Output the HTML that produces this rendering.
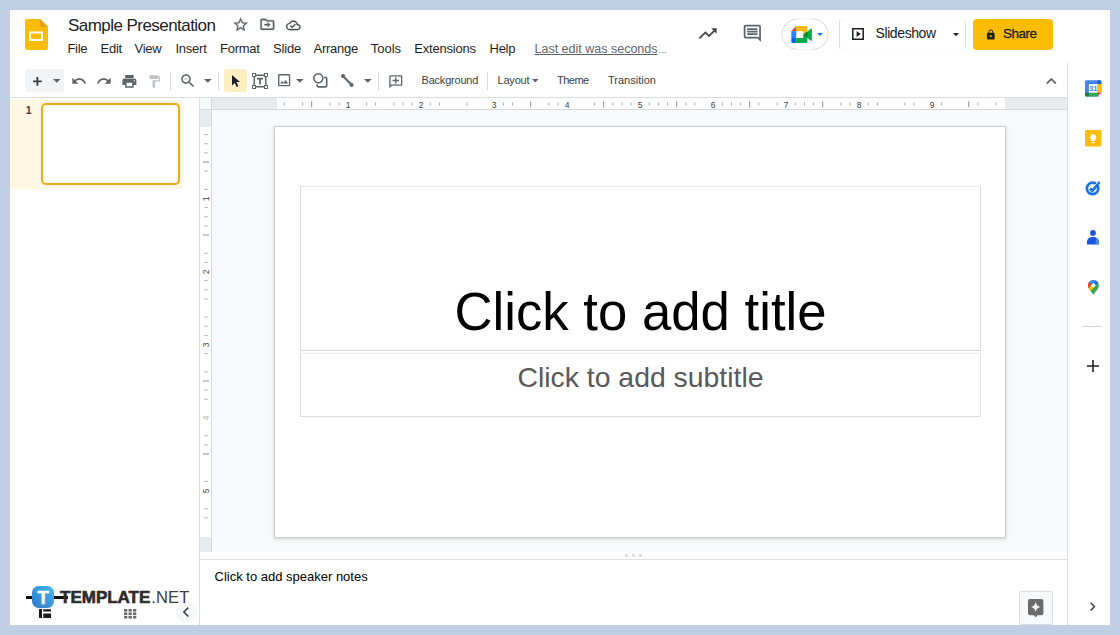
<!DOCTYPE html>
<html lang="en">
<head>
<meta charset="utf-8">
<title>Sample Presentation - Google Slides</title>
<style>
*{box-sizing:border-box;margin:0;padding:0}
html,body{width:1120px;height:635px;overflow:hidden;background:#c1cfe6}
body{font-family:"Liberation Sans",sans-serif;color:#202124;position:relative}
.abs,#app *{position:absolute}
#app{position:absolute;left:10px;top:10px;width:1100px;height:615px;background:#fff;overflow:hidden}
/* coordinates inside #app are page coords minus 10 */
.t{white-space:nowrap;line-height:1}
svg{display:block;overflow:visible}
.menu{top:30.900px;font-size:13px;letter-spacing:-.25px;line-height:16px;color:#1f1f1f}
.tb{top:64px;font-size:11px;letter-spacing:-.2px;line-height:13px;color:#3c4043}
.sep{width:1px;background:#dadce0;top:62px;height:18px}
.ic{fill:#5f6368}
.caret{width:0;height:0;border-left:3.5px solid transparent;border-right:3.5px solid transparent;border-top:3.5px solid #5f6368}
</style>
</head>
<body>
<div id="app">

<!-- ===== header ===== -->
<div id="logo" style="left:15px;top:9px;width:23px;height:31px">
<svg width="23" height="31" viewBox="0 0 23 31"><path d="M2.5 0H15l8 8v20.5a2.5 2.5 0 0 1-2.5 2.5h-18A2.5 2.5 0 0 1 0 28.500V2.5A2.500 2.500 0 0 1 2.500 0z" fill="#fbbc04"/><path d="M15 0l8 8h-6a2 2 0 0 1-2-2z" fill="#f29900"/><path d="M4 12.500h14v9.500H4zM6 14.500v5.500h10v-5.500z" fill="#fff" fill-rule="evenodd"/></svg>
</div>
<div class="t" id="doctitle" style="left:58px;top:6px;font-size:17px;letter-spacing:-.55px;line-height:20px;color:#202124">Sample Presentation</div>

<div class="t menu" style="left:57.4px">File</div>
<div class="t menu" style="left:90.500px">Edit</div>
<div class="t menu" style="left:124.500px">View</div>
<div class="t menu" style="left:165.500px">Insert</div>
<div class="t menu" style="left:210px">Format</div>
<div class="t menu" style="left:263px;letter-spacing:-.15px">Slide</div>
<div class="t menu" style="left:303.500px">Arrange</div>
<div class="t menu" style="left:360.700px;letter-spacing:0">Tools</div>
<div class="t menu" style="left:404.300px;letter-spacing:-.2px">Extensions</div>
<div class="t menu" style="left:479.500px">Help</div>
<div class="t menu" style="left:524.500px;font-size:12.500px;letter-spacing:0;color:#5f6368;top:30.700px"><span style="position:static;text-decoration:underline">Last edit was seconds</span><span style="position:static;font-size:9px;letter-spacing:-.3px;margin-left:.5px">…</span></div>

<!-- ===== toolbar ===== -->
<div id="tbline" style="left:0;top:87px;width:1058px;height:1px;background:#dadce0"></div>
<div style="left:15px;top:59px;width:39px;height:23px;border-radius:3px;background:#f1f3f4"></div>
<div style="left:214px;top:59px;width:23px;height:23px;border-radius:3px;background:#feefc3"></div>
<div class="sep" style="left:160px"></div>
<div class="sep" style="left:208px"></div>
<div class="sep" style="left:368px"></div>
<div class="sep" style="left:477px"></div>
<div class="t tb" style="left:411.500px">Background</div>
<div class="t tb" style="left:487.500px">Layout</div>
<div class="t tb" style="left:547px;letter-spacing:-.5px">Theme</div>
<div class="t tb" style="left:598px;letter-spacing:0">Transition</div>

<!-- ===== header icons ===== -->
<svg style="left:221.76px;top:5.72px" width="17.28" height="17.28" viewBox="0 0 24 24" ><path d="M22 9.240l-7.190-.62L12 2 9.190 8.630 2 9.240l5.460 4.730L5.820 21 12 17.270 18.180 21l-1.630-7.030L22 9.240zM12 15.400l-3.760 2.270 1-4.280-3.320-2.880 4.380-.38L12 6.100l1.710 4.040 4.380.38-3.320 2.880 1 4.280L12 15.400z" fill="#5f6368" stroke="#5f6368" stroke-width="0.3" stroke-linejoin="round"/></svg>
<svg style="left:248.51px;top:6.22px" width="16.68" height="16.68" viewBox="0 0 24 24" ><path d="M20 6h-8l-2-2H4c-1.100 0-2 .9-2 2v12c0 1.100.9 2 2 2h16c1.100 0 2-.9 2-2V8c0-1.100-.9-2-2-2zm0 12H4V6h5.170l2 2H20v10zm-7.500-2l4-3.500-4-3.500v2.500H8v2h4.500V16z" fill="#5f6368" stroke="#5f6368" stroke-width="0.45" stroke-linejoin="round"/></svg>
<svg style="left:276.30px;top:7.57px" width="14.60" height="14.60" viewBox="0 0 24 24" ><path d="M19.350 10.040C18.670 6.590 15.640 4 12 4 9.110 4 6.600 5.640 5.350 8.040 2.340 8.360 0 10.910 0 14c0 3.310 2.690 6 6 6h13c2.760 0 5-2.240 5-5 0-2.640-2.050-4.780-4.650-4.960zM19 18H6c-2.210 0-4-1.790-4-4 0-2.050 1.530-3.760 3.560-3.970l1.070-.11.5-.95C8.080 7.140 9.940 6 12 6c2.620 0 4.880 1.860 5.390 4.430l.3 1.500 1.530.11c1.560.1 2.780 1.410 2.780 2.960 0 1.650-1.350 3-3 3zm-9-3.820l-2.090-2.090L6.500 13.500 10 17l6.010-6.010-1.410-1.410z" fill="#4a4d51" stroke="#4a4d51" stroke-width="0.4" stroke-linejoin="round"/></svg>
<svg style="left:686.81px;top:12.63px" width="21.48" height="21.48" viewBox="0 0 24 24" ><path d="M16 6l2.290 2.290-4.880 4.880-4-4L2 16.590 3.410 18l6-6 4 4 6.300-6.290L22 12V6z" fill="#444746"/></svg>
<svg style="left:732.28px;top:13.18px" width="20.64" height="20.64" viewBox="0 0 24 24" ><path d="M21.990 4c0-1.100-.89-2-1.990-2H4c-1.100 0-2 .9-2 2v12c0 1.100.9 2 2 2h14l4 4-.01-18zM20 4v13.170L18.830 16H4V4h16zM6 12h12v2H6zm0-3h12v2H6zm0-3h12v2H6z" fill="#5f6368"/></svg>
<svg style="left:771px;top:8.2px" width="48" height="32" viewBox="0 0 48 32"><path d="M16.2 .9A15.3 15.3 0 0 0 16.2 31.500M31.800 .9A15.3 15.3 0 0 1 31.800 31.500" fill="none" stroke="#d3d6da" stroke-width=".9"/><path d="M16.2 .9H31.800M16.2 31.500H31.800" fill="none" stroke="#f1f2f4" stroke-width=".9"/></svg>
<svg style="left:780.8px;top:15.8px" width="21.2" height="17" viewBox="0 0 21.2 17"><path d="M.3 5.1L5.3 .1V5.1z" fill="#ea4335"/><path d="M5.3 .1H15a1.4 1.4 0 0 1 1.4 1.4V5.6L12.3 8.700V5.200H5.300z" fill="#fbbc04"/><path d="M.3 5.1h5v7h-5z" fill="#2684fc"/><path d="M.3 12.1h5V17H1.8a1.500 1.500 0 0 1-1.500-1.500z" fill="#0066da"/><path d="M5.3 12.1h7V8.700l4.100 3.100v3.800A1.400 1.400 0 0 1 15 17H5.300z" fill="#00ac47"/><path d="M12.3 8.700L20 2.700c.4-.3.900 0 .9.500v11.100c0 .5-.5.800-.9.500z" fill="#00ac47"/><path d="M12.3 8.700L16.400 5.600v6.200z" fill="#00832d"/></svg>

<div style="left:829px;top:8.500px;width:127px;height:31.500px;border:1px solid #dcdfe3;border-top-color:rgba(220,223,227,.12);border-bottom-color:rgba(220,223,227,.12);border-radius:4px"></div>
<svg style="left:842.1px;top:17.8px" width="12" height="12" viewBox="0 0 12 12"><path d="M.8 .8h10.400v10.400H.8z" fill="none" stroke="#1b1c1e" stroke-width="1.500"/><path d="M4.600 3.100v5.800L8.700 6z" fill="#1b1c1e"/></svg>
<div class="t" style="left:865.500px;top:15px;font-size:14px;letter-spacing:-.4px;line-height:16px;color:#202124">Slideshow</div>

<div style="left:963px;top:9px;width:80px;height:31px;border-radius:4px;background:#fbbc04"></div>
<svg style="left:974.78px;top:18.62px" width="11.54" height="11.54" viewBox="0 0 24 24" ><path d="M18 8h-1V6c0-2.760-2.240-5-5-5S7 3.240 7 6v2H6c-1.100 0-2 .9-2 2v10c0 1.100.9 2 2 2h12c1.100 0 2-.9 2-2V10c0-1.100-.9-2-2-2zm-6 9c-1.100 0-2-.9-2-2s.9-2 2-2 2 .9 2 2-.9 2-2 2zm3.100-9H8.900V6c0-1.710 1.390-3.100 3.100-3.100 1.710 0 3.100 1.390 3.100 3.100v2z" fill="#202124"/></svg>
<div class="t" style="left:993px;top:15.6px;font-size:13.500px;letter-spacing:-.5px;-webkit-text-stroke:.28px #202124;line-height:16px;color:#202124">Share</div>
<!-- ===== toolbar icons ===== -->
<svg style="left:23.100px;top:66.600px" width="8.800" height="8.800" viewBox="0 0 8.800 8.800"><path d="M4.400 0v8.800M0 4.400h8.800" stroke="#3c4043" stroke-width="1.900" fill="none"/></svg>

<svg style="left:60.67px;top:62.73px" width="16.01" height="16.01" viewBox="0 0 24 24" ><path d="M12.5 8c-2.65 0-5.05.99-6.9 2.6L2 7v9h9l-3.620-3.620c1.390-1.160 3.160-1.880 5.120-1.880 3.540 0 6.550 2.310 7.600 5.500l2.370-.780C21.080 11.030 17.150 8 12.500 8z" fill="#5f6368"/></svg>
<svg style="left:85.97px;top:62.73px" width="16.01" height="16.01" viewBox="0 0 24 24" ><path d="M18.400 10.600C16.550 8.990 14.150 8 11.500 8c-4.650 0-8.580 3.030-9.960 7.220L3.900 16c1.050-3.190 4.050-5.500 7.600-5.500 1.950 0 3.730.72 5.120 1.880L13 16h9V7l-3.600 3.600z" fill="#5f6368"/></svg>
<svg style="left:110.50px;top:62.60px" width="16.80" height="16.80" viewBox="0 0 24 24" ><path d="M19 8H5c-1.660 0-3 1.340-3 3v6h4v4h12v-4h4v-6c0-1.660-1.340-3-3-3zm-3 11H8v-5h8v5zm3-7c-.55 0-1-.45-1-1s.45-1 1-1 1 .45 1 1-.45 1-1 1zm-1-9H6v4h12V3z" fill="#5f6368"/></svg>
<svg style="left:136.72px;top:63.66px" width="14.88" height="14.88" viewBox="0 0 24 24" ><path d="M18 4V3c0-.55-.45-1-1-1H5c-.55 0-1 .45-1 1v4c0 .55.45 1 1 1h12c.55 0 1-.45 1-1V6h1v4H9v11c0 .55.45 1 1 1h2c.55 0 1-.45 1-1v-9h8V4h-3z" fill="#bdc1c6"/></svg>
<svg style="left:168.69px;top:62.39px" width="17.69" height="17.69" viewBox="0 0 24 24" ><path d="M15.500 14h-.79l-.28-.27C15.410 12.590 16 11.110 16 9.500 16 5.910 13.090 3 9.500 3S3 5.910 3 9.500 5.910 16 9.500 16c1.610 0 3.090-.59 4.230-1.570l.27.28v.79l5 4.990L20.490 19l-4.990-5zm-6 0C7.010 14 5 11.990 5 9.500S7.010 5 9.500 5 14 7.010 14 9.500 11.990 14 9.500 14zM7 9h5v1H7z" fill="#5f6368"/></svg>

<svg style="left:221.90px;top:64.90px" width="8.10" height="12.00" viewBox="0 0 8.1 12" ><path d="M0 0v10.400l2.700-2.500 1.900 4.100 1.800-.8-1.900-4.100h3.600z" fill="#202124"/></svg>
<svg style="left:242.00px;top:63.00px" width="16.00" height="16.00" viewBox="0 0 16 16" ><path d="M2.200 2.200h11.600v11.600H2.200z" fill="none" stroke="#5f6368" stroke-width="1.400"/><g fill="#fff" stroke="#5f6368" stroke-width="1"><rect x=".5" y=".5" width="3" height="3"/><rect x="12.500" y=".5" width="3" height="3"/><rect x=".5" y="12.500" width="3" height="3"/><rect x="12.500" y="12.500" width="3" height="3"/></g><path d="M5 4.800h6v1.700H8.850v5H7.150v-5H5z" fill="#5f6368"/></svg>
<svg style="left:266.17px;top:61.97px" width="16.27" height="16.27" viewBox="0 0 24 24" ><path d="M19 5v14H5V5h14m0-2H5c-1.100 0-2 .9-2 2v14c0 1.100.9 2 2 2h14c1.100 0 2-.9 2-2V5c0-1.100-.9-2-2-2zm-4.860 8.860l-3 3.870L9 13.140 6 17h12l-3.860-5.140z" fill="#5f6368"/></svg>

<svg style="left:302.80px;top:63.00px" width="14.50" height="14.50" viewBox="0 0 14.5 14.5" ><circle cx="5.300" cy="5.300" r="4.500" fill="none" stroke="#5f6368" stroke-width="1.600"/><path d="M11.200 4.400h1.300a1.200 1.200 0 0 1 1.200 1.200v7.100a1.200 1.200 0 0 1-1.200 1.200H5.400a1.200 1.200 0 0 1-1.200-1.200v-1.200" fill="none" stroke="#5f6368" stroke-width="1.600"/></svg>
<svg style="left:330.50px;top:64.00px" width="12.60" height="13.00" viewBox="0 0 12.6 13" ><path d="M2 2l8.600 9" stroke="#5f6368" stroke-width="2.200" fill="none"/><circle cx="2" cy="2" r="2" fill="#5f6368"/><circle cx="10.600" cy="11" r="2" fill="#5f6368"/></svg>

<svg style="left:377.70px;top:63.60px" width="15.60" height="15.60" viewBox="0 0 24 24" ><path d="M2 4c0-1.100.9-2 2-2h16c1.100 0 2 .9 2 2v12c0 1.100-.9 2-2 2H6l-4 4V4zm2 13.170L5.170 16H20V4H4v13.170zM11 5h2v4h4v2h-4v4h-2v-4H7V9h4z" fill="#5f6368"/></svg>

<svg style="left:1030.75px;top:60.83px" width="20.60" height="20.60" viewBox="0 0 24 24" ><path d="M12 8l-6 6 1.410 1.410L12 10.830l4.590 4.580L18 14z" fill="#5f6368"/></svg>

<!-- carets -->
<svg style="left:42.70px;top:69.20px" width="7.6" height="3.8" viewBox="0 0 7.6 3.8"><path d="M0 0h7.6L3.8 3.8z" fill="#5f6368"/></svg>
<svg style="left:193.50px;top:69.20px" width="7.6" height="3.8" viewBox="0 0 7.6 3.8"><path d="M0 0h7.6L3.8 3.8z" fill="#5f6368"/></svg>
<svg style="left:286.10px;top:69.20px" width="7.6" height="3.8" viewBox="0 0 7.6 3.8"><path d="M0 0h7.6L3.8 3.8z" fill="#5f6368"/></svg>
<svg style="left:353.50px;top:69.20px" width="7.6" height="3.8" viewBox="0 0 7.6 3.8"><path d="M0 0h7.6L3.8 3.8z" fill="#5f6368"/></svg>
<svg style="left:521.70px;top:69.40px" width="6.6" height="3.4" viewBox="0 0 6.6 3.4"><path d="M0 0h6.6L3.3 3.4z" fill="#5f6368"/></svg>
<svg style="left:806.60px;top:22.80px" width="6" height="3" viewBox="0 0 6 3"><path d="M0 0h6L3.0 3z" fill="#1a73e8"/></svg>
<svg style="left:942.8px;top:23px" width="6" height="3.2" viewBox="0 0 6 3.2"><path d="M0 0h6L3 3.200z" fill="#202124"/></svg>
<!-- ===== filmstrip ===== -->
<div style="left:0;top:90px;width:173px;height:89px;background:#fef7e4;border-radius:0 4px 4px 0"></div>
<div class="t" id="num1" style="left:15.700px;top:94.800px;font-size:10.500px;font-weight:700;color:#3c4043">1</div>
<div style="left:31px;top:93px;width:139px;height:82px;border:2px solid #f0a91a;border-radius:5px;background:#fff"></div>
<div style="left:189px;top:88px;width:1px;height:527px;background:#dadce0"></div>

<!-- ===== editor ===== -->
<div id="canvas" style="left:190px;top:88px;width:867px;height:454px;background:#f8f9fa"></div>
<div id="hruler" style="left:202px;top:88px;width:855px;height:12px;background:#e8eaed;border-bottom:1px solid #d5d8dc"></div>
<div style="left:267px;top:88px;width:728px;height:11px;background:#fff"></div>
<div id="vruler" style="left:190px;top:100px;width:12px;height:442px;background:#e8eaed;border-right:1px solid #d5d8dc"></div>
<div style="left:190px;top:117px;width:11px;height:410px;background:#fff"></div>
<div style="left:190px;top:88px;width:12px;height:12px;background:#f9fafb;border-right:1px solid #d5d8dc;border-bottom:1px solid #d5d8dc"></div>

<svg id="hticks" style="left:202px;top:87.6px" width="855" height="13" viewBox="0 0 855 13" font-family="Liberation Sans, sans-serif" font-size="8.500" fill="#3c4043"><path d="M72.32 4.400v3.200M90.57 4.400v3.200M117.95 4.400v3.200M127.07 4.400v3.200M154.45 4.400v3.200M163.57 4.400v3.200M181.82 4.400v3.200M190.95 4.400v3.200M200.07 4.400v3.200M218.32 4.400v3.200M227.45 4.400v3.200M254.82 4.400v3.200M291.32 4.400v3.200M300.45 4.400v3.200M336.95 4.400v3.200M346.07 4.400v3.200M382.57 4.400v3.200M400.82 4.400v3.200M409.95 4.400v3.200M419.07 4.400v3.200M437.32 4.400v3.200M446.45 4.400v3.200M455.57 4.400v3.200M473.82 4.400v3.200M482.95 4.400v3.200M510.32 4.400v3.200M519.45 4.400v3.200M528.58 4.400v3.200M546.83 4.400v3.200M565.08 4.400v3.200M583.33 4.400v3.200M592.45 4.400v3.200M601.58 4.400v3.200M628.95 4.400v3.200M638.08 4.400v3.200M656.33 4.400v3.200M665.45 4.400v3.200M692.83 4.400v3.200M701.95 4.400v3.200M729.33 4.400v3.200M765.83 4.400v3.200M784.08 4.400v3.200" stroke="#a6abb1" stroke-width="1" fill="none"/><path d="M99.70 3.200v6M318.70 3.200v6M391.70 3.200v6M464.70 3.200v6M537.70 3.200v6M610.70 3.200v6M756.70 3.200v6" stroke="#8a8f95" stroke-width="1" fill="none"/><text x="136.20" y="9.700" text-anchor="middle">1</text><text x="209.20" y="9.700" text-anchor="middle">2</text><text x="282.20" y="9.700" text-anchor="middle">3</text><text x="355.20" y="9.700" text-anchor="middle">4</text><text x="428.20" y="9.700" text-anchor="middle">5</text><text x="501.20" y="9.700" text-anchor="middle">6</text><text x="574.20" y="9.700" text-anchor="middle">7</text><text x="647.20" y="9.700" text-anchor="middle">8</text><text x="720.20" y="9.700" text-anchor="middle">9</text></svg>
<svg id="vticks" style="left:189.6px;top:99.1px" width="13" height="440" viewBox="0 0 13 440" font-family="Liberation Sans, sans-serif" font-size="8.500" fill="#3c4043"><path d="M4.500 25.62h3.200M4.500 34.75h3.200M4.500 43.88h3.200M4.500 62.12h3.200M4.500 80.38h3.200M4.500 98.62h3.200M4.500 107.75h3.200M4.500 116.88h3.200M4.500 144.25h3.200M4.500 153.38h3.200M4.500 171.62h3.200M4.500 180.75h3.200M4.500 189.88h3.200M4.500 208.12h3.200M4.500 217.25h3.200M4.500 226.38h3.200M4.500 244.62h3.200M4.500 262.88h3.200M4.500 281.12h3.200M4.500 290.25h3.200M4.500 326.75h3.200M4.500 335.88h3.200M4.500 372.38h3.200M4.500 399.75h3.200M4.500 408.88h3.200" stroke="#a6abb1" stroke-width="1" fill="none"/><path d="M3 53.00h6M3 126.00h6M3 272.00h6M3 345.00h6" stroke="#8a8f95" stroke-width="1" fill="none"/><text transform="translate(9.200 90.00) rotate(-90)" text-anchor="middle">1</text><text transform="translate(9.200 163.00) rotate(-90)" text-anchor="middle">2</text><text transform="translate(9.200 236.00) rotate(-90)" text-anchor="middle">3</text><text transform="translate(9.200 309.00) rotate(-90)" text-anchor="middle" opacity=".35">4</text><text transform="translate(9.200 382.00) rotate(-90)" text-anchor="middle">5</text></svg>

<div id="slide" style="left:264px;top:116px;width:732px;height:412px;background:#fff;border:1px solid #cfcfcf;box-shadow:0 1px 3px rgba(0,0,0,.18)"></div>
<div id="tbox" style="left:290px;top:176px;width:681px;height:165px;border:1px solid #d6d6d6;border-top-color:#e4e4e4;border-right-color:#dedede"></div>
<div id="sbox" style="left:290px;top:343px;width:681px;height:64px;border:1px solid #dcdcdc;border-top-color:#ebebeb;border-right-color:#e4e4e4"></div>
<div class="t" id="title" style="left:290px;width:681px;top:272.200px;text-align:center;font-size:52.720px;line-height:60px;color:#000">Click to add title</div>
<div class="t" id="subtitle" style="left:290px;width:681px;top:351px;text-align:center;font-size:28.390px;line-height:32px;color:#595959">Click to add subtitle</div>

<!-- ===== notes ===== -->
<div style="left:190px;top:542px;width:867px;height:7px;background:#fff"></div>
<div style="left:190px;top:549px;width:867px;height:1px;background:#e0e0e0"></div>
<div style="left:615px;top:544px;width:3px;height:3px;background:#dadce0"></div>
<div style="left:622px;top:544px;width:3px;height:3px;background:#dadce0"></div>
<div style="left:629px;top:544px;width:3px;height:3px;background:#dadce0"></div>
<div class="t" id="notes" style="left:204.500px;top:559.200px;font-size:13px;line-height:15px;color:#000">Click to add speaker notes</div>

<!-- ===== right side panel ===== -->
<div style="left:1057px;top:53px;width:1px;height:562px;background:#dadce0"></div>
<div style="left:1073px;top:316px;width:18px;height:1px;background:#d0d3d7"></div>

<!-- ===== side panel icons ===== -->
<svg style="left:1074.80px;top:69.90px" width="16.40" height="16.80" viewBox="0 0 16 16"><rect x="0" y="0" width="16" height="16" rx="1.600" fill="#4285f4"/>
<path d="M12.200 0H14.400A1.600 1.600 0 0 1 16 1.600V3.800H12.200z" fill="#1967d2"/>
<path d="M12.200 3.800H16V12.200H12.200z" fill="#fbbc04"/>
<path d="M3.800 12.200H12.200V16H3.800z" fill="#34a853"/>
<path d="M0 12.200H3.800V16H1.600A1.600 1.600 0 0 1 0 14.400z" fill="#188038"/>
<path d="M12.200 12.200H16L12.200 16z" fill="#ea4335"/>
<path d="M12.200 16L16 12.200V16z" fill="#fff"/>
<rect x="3.800" y="3.800" width="8.400" height="8.400" fill="#fff"/>
<text x="8" y="10.900" text-anchor="middle" font-family="Liberation Sans, sans-serif" font-weight="700" font-size="7.500" letter-spacing="-.4" fill="#4285f4">31</text></svg>
<svg style="left:1074.80px;top:119.90px" width="16.40" height="16.40" viewBox="0 0 16 16"><rect x="0" y="0" width="16" height="16" rx="1" fill="#fbbc04"/>
<path d="M8 4.2a3 3 0 0 0-1.700 5.500v1.100h3.400V9.700A3 3 0 0 0 8 4.200zM6.500 11.600h3v1.200h-3z" fill="#fff"/></svg>
<svg style="left:1075px;top:170.600px" width="16" height="16" viewBox="0 0 16 16"><circle cx="7.600" cy="7.400" r="5.700" fill="none" stroke="#1a73e8" stroke-width="2.700"/>
<path d="M5 7.400l2.300 2.300 5.300-6" fill="none" stroke="#1a73e8" stroke-width="2.800"/>
<circle cx="13.500" cy="2" r="1.700" fill="#1a73e8"/>
<path d="M9.600 4.300L13.600 .9" stroke="#fff" stroke-width=".8" fill="none"/></svg>
<svg style="left:1077.00px;top:220.20px" width="12.20" height="14.60" viewBox="0 0 12.200 14.600"><circle cx="6" cy="2.900" r="2.900" fill="#1a56db"/>
<path d="M0 14.600v-2.800C0 9 2.700 7 6 7s6 2 6 4.800v2.800z" fill="#1a56db"/>
<path d="M9.200 7.800c1.700.8 2.800 2.300 2.800 4v2.800H8.200z" fill="#5b9bf5" opacity=".7"/></svg>
<svg style="left:1077.60px;top:269.80px" width="10.80" height="15.00" viewBox="0 0 10.800 15"><path d="M5.400 0a5.400 5.400 0 0 0-5.400 5.400c0 2.300 1.300 3.900 2.600 5.600 1.100 1.400 2.100 2.600 2.800 4 .7-1.400 1.700-2.600 2.800-4 1.300-1.700 2.600-3.300 2.600-5.600A5.400 5.400 0 0 0 5.400 0z" fill="#34a853"/>
<path d="M5.400 0a5.400 5.400 0 0 0-4.200 2L4 4.400 8.200.8A5.400 5.400 0 0 0 5.400 0z" fill="#4285f4"/>
<path d="M1.200 2A5.400 5.400 0 0 0 0 5.400c0 1 .25 1.850.65 2.650L4 4.400z" fill="#ea4335"/>
<path d="M.65 8.050c.5 1 1.200 1.950 1.950 2.950L6.900 6.200 4 4.400z" fill="#fbbc04"/>
<path d="M8.200.8L4 4.400 6.900 6.200 10.300 3A5.400 5.400 0 0 0 8.200.8z" fill="#1a73e8"/>
<circle cx="5.400" cy="5.300" r="2" fill="#fff"/></svg>
<svg style="left:1077.00px;top:350.20px" width="12.00" height="12.00" viewBox="0 0 12 12"><path d="M6 0v12M0 6h12" stroke="#202124" stroke-width="1.600" fill="none"/></svg>
<svg style="left:1073.64px;top:588.30px" width="17.20" height="17.20" viewBox="0 0 24 24"><path d="M10 6L8.590 7.410 13.170 12l-4.580 4.590L10 18l6-6z" fill="#3c4043"/></svg>
<div style="left:1009px;top:581px;width:34px;height:34px;border:1px solid #dadce0;border-radius:3px;background:#f8f9fa"></div>
<svg style="left:1017.90px;top:589.00px" width="15.40" height="18.80" viewBox="0 0 15.400 18.800"><path d="M2 0h11.400a2 2 0 0 1 2 2v12.300a2 2 0 0 1-2 2H9.400L7.700 18.400 6 16.300H2a2 2 0 0 1-2-2V2a2 2 0 0 1 2-2z" fill="#6b6b6b"/>
<path d="M7.700 2.600C8.200 6 9.400 7.400 12.700 8.100 9.400 8.800 8.200 10.200 7.700 13.600 7.200 10.200 6 8.800 2.700 8.100 6 7.400 7.200 6 7.700 2.600z" fill="#fff"/></svg>
<!-- ===== filmstrip bottom + watermark ===== -->
<svg style="left:29.00px;top:598.80px" width="12.00" height="9.00" viewBox="0 0 12 9"><path d="M0 0h3v9H0zM4.3 .2H12v2.4H4.3zM4.3 4.6H12V9H4.3z" fill="#1b1b1b"/></svg>
<svg style="left:114.00px;top:598.50px" width="12.30" height="9.50" viewBox="0 0 12.300 9.500"><g fill="#6a6a6a"><rect x="0" y="0" width="3.300" height="2.600"/><rect x="4.500" y="0" width="3.300" height="2.600"/><rect x="9" y="0" width="3.300" height="2.600"/><rect x="0" y="3.450" width="3.300" height="2.600"/><rect x="4.500" y="3.450" width="3.300" height="2.600"/><rect x="9" y="3.450" width="3.300" height="2.600"/><rect x="0" y="6.900" width="3.300" height="2.600"/><rect x="4.500" y="6.900" width="3.300" height="2.600"/><rect x="9" y="6.900" width="3.300" height="2.600"/></g></svg>
<div style="left:166px;top:592px;width:20.500px;height:20.500px;border-radius:50%;background:#f6f7f8"></div>
<svg style="left:165.61px;top:592.28px" width="20.08" height="20.08" viewBox="0 0 24 24"><path d="M15.410 7.410L14 6l-6 6 6 6 1.410-1.410L10.830 12z" fill="#444746"/></svg>
<div style="left:16px;top:585.800px;width:42px;height:3px;background:#111"></div>
<div id="wm-badge" style="left:22.300px;top:576px;width:21.800px;height:22.200px;border-radius:6.500px;background:linear-gradient(45deg,#2f78c4 0%,#3a9bdc 55%,#40bdec 100%)"></div>
<div class="t" style="left:22.300px;top:577.700px;width:21.800px;text-align:center;font-size:18.500px;font-weight:700;-webkit-text-stroke:.5px #fff;line-height:20px;color:#fff">T</div>
<div class="t" id="wm" style="left:50px;top:576.600px;font-size:17px;line-height:20px;color:#2b2b2b;letter-spacing:0"><b style="position:static;-webkit-text-stroke:.6px #2b2b2b">TEMPLATE</b><span style="position:static;font-size:16.500px;color:#3d3d3d;letter-spacing:.2px;margin-left:.8px">.NET</span></div>

</div>
</body>
</html>
